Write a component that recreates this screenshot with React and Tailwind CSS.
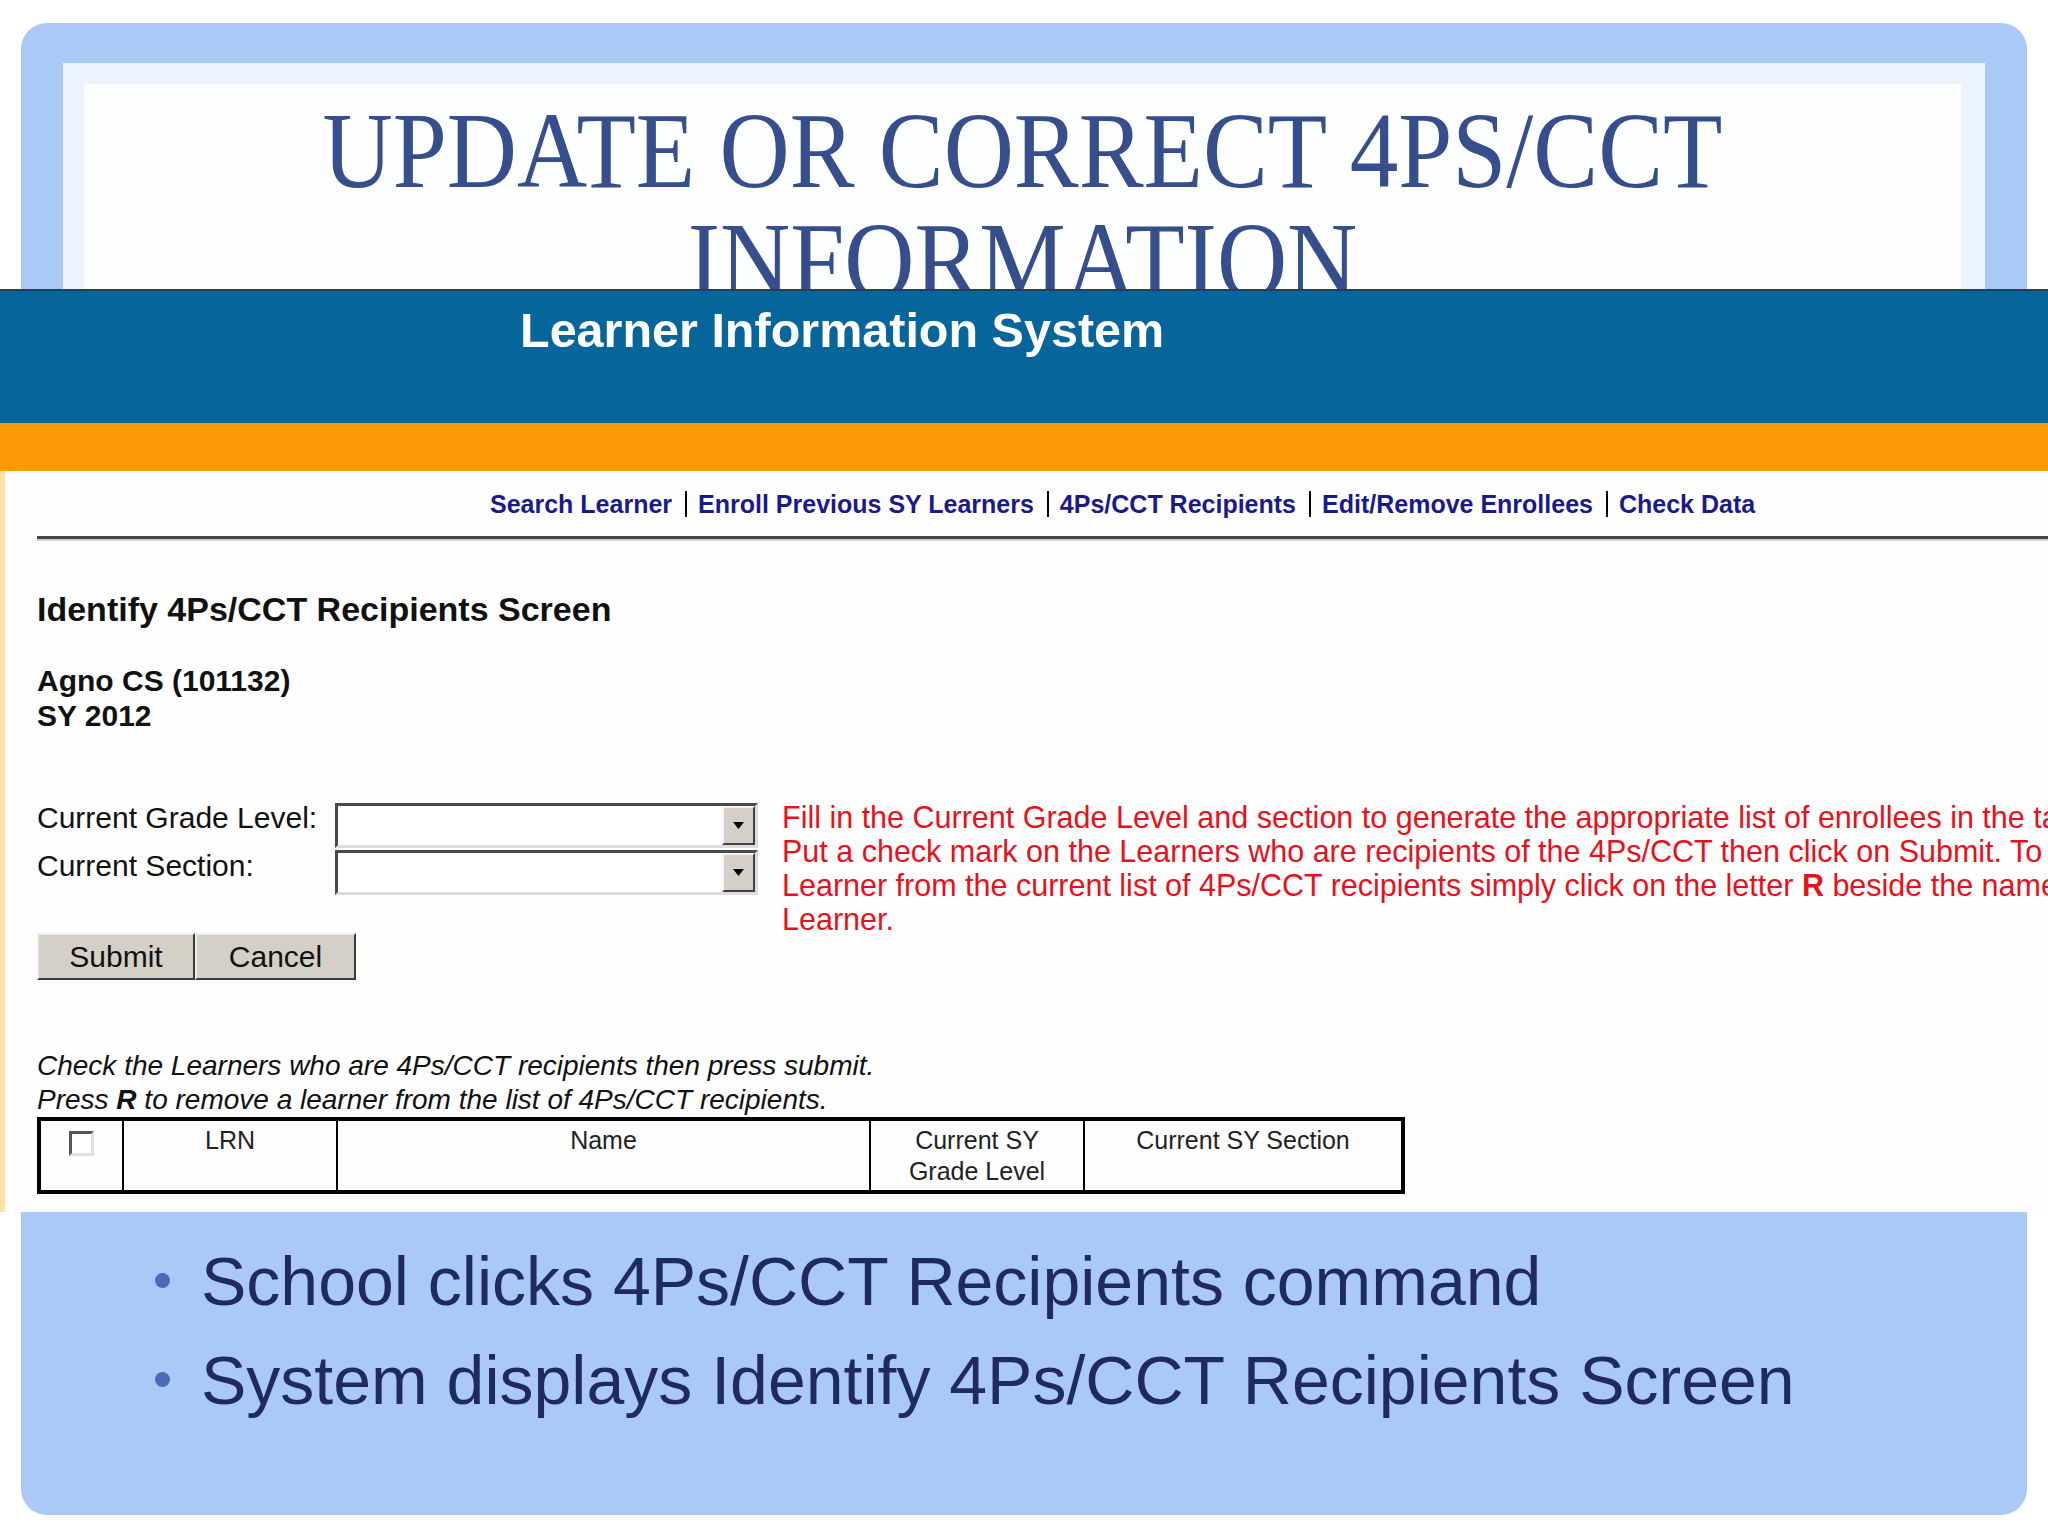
import React from 'react';

const navLinks = ['Search Learner', 'Enroll Previous SY Learners', '4Ps/CCT Recipients', 'Edit/Remove Enrollees', 'Check Data'];

const SelectBox = () => (
  <div className="w-[423px] h-[45px] border-[3px] border-t-[#4a4a4a] border-l-[#4a4a4a] border-b-[#dcdcdc] border-r-[#dcdcdc] bg-white flex justify-end">
    <div className="w-[33px] h-full bg-[#d4d0c8] border-2 border-t-[#f4f4f4] border-l-[#f4f4f4] border-b-[#404040] border-r-[#404040] flex items-center justify-center">
      <svg width="11" height="7" viewBox="0 0 11 7">
        <path d="M0 0 H11 L5.5 7 Z" fill="#000" />
      </svg>
    </div>
  </div>
);

const WinButton = ({ label, width }) => (
  <div className={`${width} h-[47px] bg-[#d4d0c8] border-2 border-t-[#eeeeee] border-l-[#eeeeee] border-b-[#3a3a3a] border-r-[#3a3a3a] flex items-center justify-center text-[30px] text-[#111]`}>
    {label}
  </div>
);

export default function App() {
  return (
    <div className="w-[2048px] h-[1536px] bg-white overflow-hidden font-['Liberation_Sans',Arial,sans-serif]">
      {/* Slide title frame */}
      <div className="mx-[21px] mt-[23px] h-[266px] rounded-t-[26px] bg-[#abc9f7] px-[42px] pt-[40px] overflow-hidden">
        <div className="h-full bg-[#edf3fd] pl-[21px] pr-[24px] pt-[21px]">
          <div className="h-full bg-[#fdfeff] pt-[12px] text-center">
            <h1 className="font-['Liberation_Serif','Times_New_Roman',serif] text-[108px] leading-[110px] text-[#364f8c] scale-x-[0.9]">
              UPDATE OR CORRECT 4PS/CCT
              <br />
              INFORMATION
            </h1>
          </div>
        </div>
      </div>

      {/* Screenshot of the LIS page */}
      <div className="h-[923px] overflow-hidden">
        <div className="h-[134px] bg-[#06659b] border-t-2 border-[#17465a] pl-[520px] pt-[15px]">
          <div className="text-[48.5px] leading-none font-bold text-white">Learner Information System</div>
        </div>
        <div className="h-[48px] bg-[#fb9a06]" />
        <div className="h-[741px] border-l-[5px] border-[#ffe1a6] bg-[#fefefe]">
          {/* Nav */}
          <div className="pt-[18px] pl-[485px] flex items-center whitespace-nowrap text-[25px] leading-[30px] font-bold text-[#1a1a8a]">
            {navLinks.map((link, i) => (
              <React.Fragment key={link}>
                {i > 0 && <span className="inline-block w-[2px] h-[26px] bg-black ml-[13px] mr-[11px]" />}
                <span>{link}</span>
              </React.Fragment>
            ))}
          </div>
          <div className="ml-[32px] mt-[17px] h-[3px] bg-[#454545] shadow-[0_2px_0_#cfcfcf]" />

          <div className="pl-[32px]">
            <h2 className="mt-[50px] text-[34px] leading-[40px] font-bold text-[#111]">Identify 4Ps/CCT Recipients Screen</h2>

            <div className="mt-[34px] text-[30px] leading-[35px] font-bold text-[#111]">
              <div>Agno CS (101132)</div>
              <div>SY 2012</div>
            </div>

            {/* Form + instructions */}
            <div className="mt-[70px] flex">
              <div className="w-[721px] shrink-0">
                <div className="flex flex-col gap-[2px]">
                  <div className="flex items-start">
                    <div className="w-[298px] text-[30px] leading-[29px] text-[#111]">Current Grade Level:</div>
                    <SelectBox />
                  </div>
                  <div className="flex items-start">
                    <div className="w-[298px] text-[30px] leading-[32px] text-[#111]">Current Section:</div>
                    <SelectBox />
                  </div>
                </div>
                <div className="mt-[38px] flex">
                  <WinButton label="Submit" width="w-[158px]" />
                  <WinButton label="Cancel" width="w-[161px]" />
                </div>
              </div>
              <div className="ml-[24px] -mt-[3px] whitespace-nowrap text-[30.5px] leading-[34px] text-[#e8101a]">
                <div>Fill in the Current Grade Level and section to generate the appropriate list of enrollees in the table below.</div>
                <div>Put a check mark on the Learners who are recipients of the 4Ps/CCT then click on Submit. To remove a</div>
                <div>
                  Learner from the current list of 4Ps/CCT recipients simply click on the letter <b>R</b> beside the name of the
                </div>
                <div>Learner.</div>
              </div>
            </div>

            {/* Table instructions */}
            <div className="mt-[69px] text-[28px] leading-[34px] italic text-[#111]">
              <div>Check the Learners who are 4Ps/CCT recipients then press submit.</div>
              <div>
                Press <b>R</b> to remove a learner from the list of 4Ps/CCT recipients.
              </div>
            </div>

            {/* Table header */}
            <div className="w-[1368px] h-[77px] border-4 border-black flex text-[25px] leading-[31px] text-center text-[#222]">
              <div className="w-[81px] flex justify-center pt-[10px]">
                <div className="w-[25px] h-[25px] bg-white border-[3px] border-t-[#555] border-l-[#555] border-b-[#e0e0e0] border-r-[#e0e0e0]" />
              </div>
              <div className="w-[214px] border-l-2 border-black pt-[4px]">LRN</div>
              <div className="w-[533px] border-l-2 border-black pt-[4px]">Name</div>
              <div className="w-[214px] border-l-2 border-black pt-[4px]">
                Current SY
                <br />
                Grade Level
              </div>
              <div className="w-[318px] border-l-2 border-black pt-[4px]">Current SY Section</div>
            </div>
          </div>
        </div>
      </div>

      {/* Slide bullets */}
      <div className="mx-[21px] h-[303px] rounded-b-[26px] bg-[#abc9f7] pt-[19px]">
        {['School clicks 4Ps/CCT Recipients command', 'System displays Identify 4Ps/CCT Recipients Screen'].map((item) => (
          <div key={item} className="flex items-center h-[99px] pl-[134px]">
            <span className="w-[15px] h-[15px] rounded-full bg-[#4a6bb5] mr-[31px]" />
            <span className="text-[68px] text-[#1f2a5e] whitespace-nowrap">{item}</span>
          </div>
        ))}
      </div>
    </div>
  );
}
